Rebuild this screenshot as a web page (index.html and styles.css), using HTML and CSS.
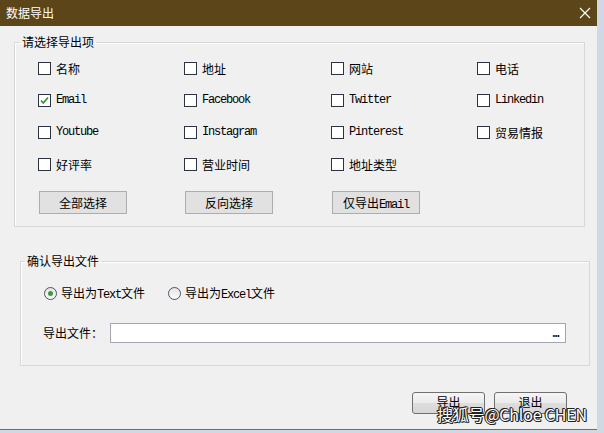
FILE: index.html
```html
<!DOCTYPE html>
<html lang="zh-CN">
<head>
    <meta charset="UTF-8">
    <title>数据导出</title>
    <link rel="stylesheet" href="styles.css">
</head>
<body>
    <div class="window">
        <div class="titlebar">
            <span class="title">数据导出</span>
            <svg class="close" width="12" height="12" viewBox="0 0 12 12">
                <path d="M1 1 L11 11 M11 1 L1 11" stroke="#fff" stroke-width="1.2" fill="none"/>
            </svg>
        </div>

        <div class="content">
            <!-- export fields -->
            <fieldset class="group group-items">
                <legend>请选择导出项</legend>
                <div class="options">
                    <label class="option"><span class="box"></span>名称</label>
                    <label class="option"><span class="box"></span>地址</label>
                    <label class="option"><span class="box"></span>网站</label>
                    <label class="option"><span class="box"></span>电话</label>

                    <label class="option"><span class="box checked"><svg width="11" height="11" viewBox="0 0 11 11"><path d="M2 5.5 L4.3 8 L9 2.5" stroke="#3c943c" stroke-width="1.8" fill="none"/></svg></span><span class="en">Email</span></label>
                    <label class="option"><span class="box"></span><span class="en">Facebook</span></label>
                    <label class="option"><span class="box"></span><span class="en">Twitter</span></label>
                    <label class="option"><span class="box"></span><span class="en">Linkedin</span></label>

                    <label class="option"><span class="box"></span><span class="en">Youtube</span></label>
                    <label class="option"><span class="box"></span><span class="en">Instagram</span></label>
                    <label class="option"><span class="box"></span><span class="en">Pinterest</span></label>
                    <label class="option"><span class="box"></span>贸易情报</label>

                    <label class="option"><span class="box"></span>好评率</label>
                    <label class="option"><span class="box"></span>营业时间</label>
                    <label class="option"><span class="box"></span>地址类型</label>
                </div>
                <div class="actions">
                    <button class="btn">全部选择</button>
                    <button class="btn">反向选择</button>
                    <button class="btn">仅导出<span class="en">Email</span></button>
                </div>
            </fieldset>

            <!-- output file -->
            <fieldset class="group group-file">
                <legend>确认导出文件</legend>
                <div class="radios">
                    <label class="radio"><span class="dot on"></span><span>导出为<span class="en">Text</span>文件</span></label>
                    <label class="radio"><span class="dot"></span><span>导出为<span class="en">Excel</span>文件</span></label>
                </div>
                <div class="file-row">
                    <span class="file-label">导出文件：</span>
                    <div class="file-input"><span class="dots">...</span></div>
                </div>
            </fieldset>

            <div class="footer">
                <button class="btn-main">导出</button>
                <button class="btn-main">退出</button>
            </div>
        </div>

        <span class="watermark">搜狐号@Chloe CHEN</span>
    </div>
</body>
</html>
```

FILE: styles.css
```css
body {
    margin: 0;
    background-color: #cfd8e3;
    font-family: "Noto Sans CJK SC", sans-serif;
    font-size: 12px;
    color: #000;
    overflow: hidden;
    text-autospace: no-autospace;
}
.window {
    position: relative;
    width: 597px;
    height: 430px;
    background-color: #f0f0f0;
    border-bottom: 1px solid #6d6d6d;
    box-sizing: border-box;
}
.titlebar {
    height: 26px;
    background-color: #5c4619;
    display: flex;
    align-items: center;
    justify-content: space-between;
    padding: 0 6px 0 6px;
}
.title {
    color: #fff;
    font-size: 12px;
    line-height: 16px;
}
.content {
    padding: 8px 0 0 2px;
}
.en {
    font-family: "Liberation Mono", monospace;
    font-size: 12px;
    letter-spacing: -1.2px;
}

/* group boxes */
.group {
    border: 1px solid #d8d8d8;
    box-shadow: inset 1px 1px 0 #fff;
    margin: 0;
    min-width: 0;
}
.group legend {
    line-height: 16px;
    padding: 0 2px;
    margin-left: -18px;
}
.group-items {
    width: 571px;
    box-sizing: border-box;
    margin-left: 12px;
    padding: 12px 0 12px 23px;
}
.options {
    display: grid;
    grid-template-columns: 146px 147px 146px 1fr;
    grid-auto-rows: 13px;
    row-gap: 19px;
}
.option {
    display: flex;
    align-items: center;
    gap: 5px;
    line-height: 13px;
    white-space: nowrap;
}
.box {
    width: 13px;
    height: 13px;
    box-sizing: border-box;
    border: 1px solid #2b3440;
    background-color: #fff;
    display: flex;
    align-items: center;
    justify-content: center;
    flex: none;
}
.actions {
    display: grid;
    grid-template-columns: 146px 147px 146px;
    margin-top: 20px;
    padding-left: 1px;
}
.btn {
    width: 88px;
    height: 23px;
    padding: 0;
    border: 1px solid #adadad;
    background-color: #e1e1e1;
    font-family: "Noto Sans CJK SC", sans-serif;
    font-size: 12px;
    color: #000;
}

.group-file {
    width: 570px;
    box-sizing: border-box;
    margin: 26px 0 0 18px;
    padding: 18px 0 22px 22px;
}
.radios {
    display: flex;
    height: 13px;
    padding-left: 1px;
}
.radio {
    display: flex;
    align-items: center;
    gap: 4px;
    line-height: 13px;
    white-space: nowrap;
}
.radio:first-child {
    width: 124px;
}
.dot {
    width: 13px;
    height: 13px;
    box-sizing: border-box;
    border: 1px solid #4a5563;
    border-radius: 50%;
    background: linear-gradient(#e4e4e4, #fbfbfb);
    display: flex;
    align-items: center;
    justify-content: center;
    flex: none;
}
.dot.on::after {
    content: "";
    width: 5px;
    height: 5px;
    border-radius: 50%;
    background-color: #3f9a3f;
}
.file-row {
    display: flex;
    align-items: center;
    margin-top: 23px;
}
.file-label {
    width: 67px;
    line-height: 20px;
}
.file-input {
    width: 456px;
    height: 20px;
    box-sizing: border-box;
    border: 1px solid #a3a8b0;
    background-color: #fff;
    display: flex;
    align-items: center;
    justify-content: flex-end;
    padding-right: 6px;
}
.dots {
    font-size: 10px;
    line-height: 10px;
    font-weight: bold;
    letter-spacing: -1px;
}

.footer {
    display: flex;
    justify-content: flex-end;
    gap: 9px;
    margin-top: 26px;
    padding-right: 30px;
}
.btn-main {
    width: 73px;
    height: 22px;
    padding: 0 0 3px;
    border: 1px solid #707070;
    border-radius: 3px;
    background: linear-gradient(#f5f5f5, #ebebeb 50%, #dedede 51%, #d6d6d6);
    font-family: "Noto Sans CJK SC", sans-serif;
    font-size: 12px;
    color: #000;
}

/* overlay watermark */
.watermark {
    position: absolute;
    left: 437px;
    top: 403px;
    font-size: 16px;
    line-height: 22px;
    color: #fff;
    white-space: nowrap;
    letter-spacing: -0.2px;
    text-shadow: 1px 0 0 #222, -1px 0 0 #222, 0 1px 0 #222, 0 -1px 0 #222, 1px 1px 0 #222, -1px -1px 0 #222;
}
```
